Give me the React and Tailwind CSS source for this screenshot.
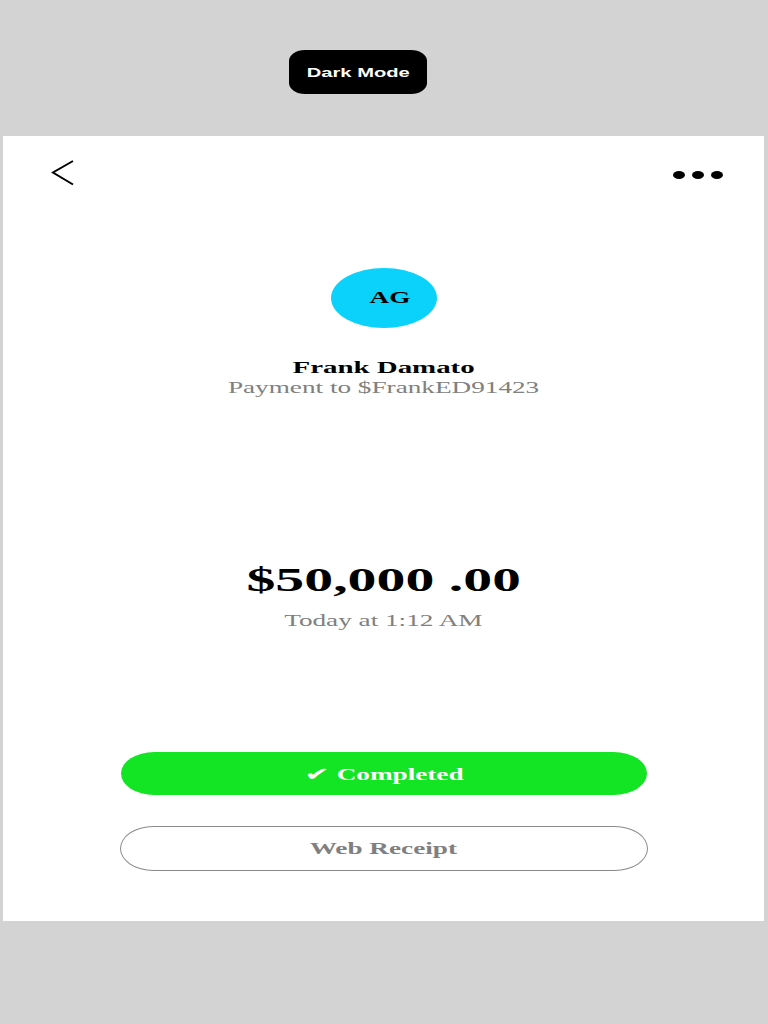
const serif = { fontFamily: '"Liberation Serif", "Times New Roman", serif' };

const Stretch = ({ children, className = '' }) => (
    <span className={`inline-block scale-x-[1.7] whitespace-nowrap ${className}`}>{children}</span>
);

const App = () => {
    return (
        <div className="min-h-[1024px] bg-[#d3d3d3] pt-[50px] overflow-hidden">
            {/* Theme toggle */}
            <button
                className="ml-[289px] w-[138px] h-[44px] bg-black text-white rounded-[16px_/_11px] flex items-center justify-center"
                style={{ fontFamily: '"Liberation Sans", Arial, sans-serif' }}
            >
                <span className="inline-block scale-x-[1.55] text-[13px] font-bold leading-none">Dark Mode</span>
            </button>

            {/* Payment card */}
            <div className="mt-[42px] ml-[3px] w-[761px] bg-white pt-[24px] pb-[50px]" style={serif}>
                <div className="flex items-start justify-between h-[24px] pl-[48px] pr-[41px]">
                    <svg width="24" height="26" viewBox="0 0 24 26" fill="none">
                        <path d="M22 1 L2 12.5 L22 24.5" stroke="#000" strokeWidth="2" strokeLinejoin="miter" />
                    </svg>
                    <div className="flex gap-[7px] mt-[11px]">
                        <span className="w-[12px] h-[8px] rounded-[50%] bg-black"></span>
                        <span className="w-[12px] h-[8px] rounded-[50%] bg-black"></span>
                        <span className="w-[12px] h-[8px] rounded-[50%] bg-black"></span>
                    </div>
                </div>

                <div className="flex flex-col items-center">
                    <div className="mt-[84px] w-[106px] h-[60px] rounded-[50%] bg-[#0ad2fa] flex items-center justify-center">
                        <Stretch className="ml-[12px] text-[16px] font-bold leading-none text-black">AG</Stretch>
                    </div>

                    <div className="mt-[30px] h-[20px] leading-[20px] text-[17px] font-bold text-black">
                        <Stretch>Frank Damato</Stretch>
                    </div>
                    <div className="h-[20px] leading-[20px] text-[16px] text-[#808080]">
                        <Stretch>Payment to $FrankED91423</Stretch>
                    </div>

                    <div className="mt-[162px] h-[40px] leading-[40px] text-[34px] font-bold text-black">
                        <Stretch>$50,000 .00</Stretch>
                    </div>
                    <div className="mt-[11px] h-[20px] leading-[20px] text-[16px] text-[#808080]">
                        <Stretch>Today at 1:12 AM</Stretch>
                    </div>

                    <button className="mt-[121px] w-[526px] h-[43px] rounded-[34px_/_22px] bg-[#13e423] text-white flex items-center justify-center">
                        <Stretch className="text-[16px] font-bold leading-none">
                            <span className="text-[18px]" style={{ fontFamily: '"DejaVu Sans", sans-serif' }}>✔</span> Completed
                        </Stretch>
                    </button>

                    <button className="mt-[31px] w-[528px] h-[45px] rounded-[34px_/_23px] border border-[#8a8a8a] bg-white text-[#808080] flex items-center justify-center">
                        <Stretch className="text-[16px] font-bold leading-none">Web Receipt</Stretch>
                    </button>
                </div>
            </div>
        </div>
    );
};

export default App;
